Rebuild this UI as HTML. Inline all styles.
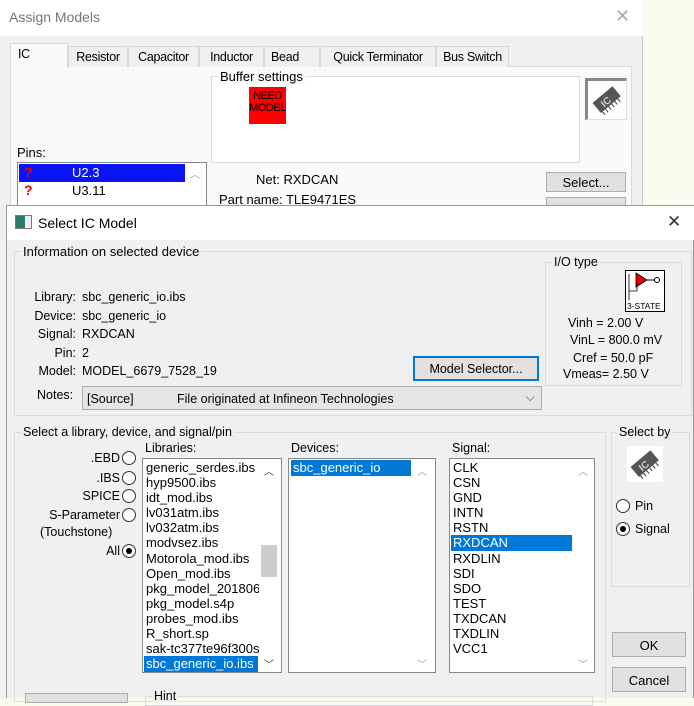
<!DOCTYPE html>
<html><head><meta charset="utf-8"><style>
*{margin:0;padding:0;box-sizing:border-box}
body{width:694px;height:698px;overflow:hidden;position:relative;background:#fbfbee;font-family:"Liberation Sans",sans-serif;font-size:12.5px;color:#000}
.a{position:absolute;white-space:nowrap}
.gb{position:absolute;border:1px solid #dcdcdc}
.gl{position:absolute;background:#f0f0f0;padding:0 2px;top:-9px;left:6px}
.btn{position:absolute;background:#e1e1e1;border:1px solid #adadad;text-align:center}
.list{position:absolute;background:#fff;border:1px solid #828790}
.sel{background:#0078d7;color:#fff}
.rad{position:absolute;width:14px;height:14px;border:1px solid #333;border-radius:50%;background:#fff}
.rad.on::after{content:"";position:absolute;left:3px;top:3px;width:6px;height:6px;border-radius:50%;background:#000}
.tab{position:absolute;top:46px;height:21px;border:1px solid #d9d9d9;border-bottom:none;background:#f0f0f0;padding:3px 0 0;font-size:12.5px;letter-spacing:-0.3px;text-align:center;white-space:nowrap}
.chev{color:#999;font-size:10px}
</style></head><body>
<div class="a" style="left:0;top:0;width:643px;height:698px;background:#f0f0f0;border-right:1px solid #ccc"></div>
<div class="a" style="left:0;top:0;width:643px;height:36px;background:#fff"></div>
<div class="a" style="left:9px;top:9px;font-size:14px;color:#777">Assign Models</div>
<div class="a" style="left:615px;top:6px;font-size:18px;color:#aaa">✕</div>
<div class="a" style="left:10px;top:66px;width:622px;height:150px;background:#fafafa;border:1px solid #d9d9d9"></div>
<div class="tab" style="left:10px;top:43px;height:25px;width:58px;background:#fafafa;text-align:left;padding-left:7px">IC</div>
<div class="tab" style="left:68px;width:60px">Resistor</div>
<div class="tab" style="left:128px;width:71px">Capacitor</div>
<div class="tab" style="left:199px;width:65px">Inductor</div>
<div class="tab" style="left:264px;width:56px;text-align:left;padding-left:6px">Bead</div>
<div class="tab" style="left:320px;width:116px">Quick Terminator</div>
<div class="tab" style="left:436px;width:73px">Bus Switch</div>
<div class="gb" style="left:211px;top:76px;width:369px;height:87px;background:#fff"><div class="gl" style="background:#fafafa;left:6px;top:-8px;font-size:13px">Buffer settings</div></div>
<div class="a" style="left:249px;top:87px;width:37px;height:37px;background:#f00;font-size:11px;line-height:12px;text-align:center;padding-top:3px;font-family:'Liberation Sans Narrow','Liberation Sans',sans-serif;letter-spacing:-0.5px">NEED<br>MODEL</div>
<div class="a" style="left:585px;top:78px;width:42px;height:42px;background:#fff;border-top:3px solid #888;border-left:3px solid #888;border-right:1px solid #ddd;border-bottom:1px solid #ddd">
<svg width="38" height="38" viewBox="0 0 38 38"><g transform="rotate(-40 19 19)"><rect x="6" y="12" width="26" height="13" fill="#555"/><text x="12" y="23" font-size="10" font-weight="bold" fill="#ccc" font-family="Liberation Sans">IC</text><path d="M8 25v4M12 25v4M16 25v4M20 25v4M24 25v4M28 25v4" stroke="#333"/></g></svg></div>
<div class="a" style="left:17px;top:145px;font-size:13px">Pins:</div>
<div class="list" style="left:17px;top:162px;width:190px;height:60px"></div>
<div class="a sel" style="left:19px;top:164px;width:166px;height:18px;background:#0a14f5"></div>
<div class="a" style="left:24px;top:164px;color:#e00;font-weight:bold;font-size:14px">?</div>
<div class="a" style="left:72px;top:165px;color:#fff;font-size:13px">U2.3</div>
<div class="a" style="left:24px;top:182px;color:#e00;font-weight:bold;font-size:14px">?</div>
<div class="a" style="left:72px;top:183px;font-size:13px">U3.11</div>
<div class="a chev" style="left:190px;top:166px">︿</div>
<div class="a" style="left:256px;top:172px;font-size:13px">Net: RXDCAN</div>
<div class="a" style="left:219px;top:192px;font-size:13px">Part name: TLE9471ES</div>
<div class="btn" style="left:546px;top:172px;width:80px;height:20px;padding-top:2px;font-size:13px">Select...</div>
<div class="btn" style="left:546px;top:197px;width:80px;height:20px"></div>
<div class="a" style="left:6px;top:205px;width:688px;height:493px;background:#f0f0f0;border:1px solid #999;border-bottom:none"></div>
<div class="a" style="left:7px;top:206px;width:687px;height:34px;background:#fff"></div>
<div class="a" style="left:15px;top:215px;width:17px;height:14px;border:1px solid #777;background:linear-gradient(90deg,#2c7a6a 60%,#eee 60%)"></div>
<div class="a" style="left:38px;top:215px;font-size:14px">Select IC Model</div>
<div class="a" style="left:667px;top:212px;font-size:17px;color:#333">✕</div>
<div class="gb" style="left:14px;top:251px;width:678px;height:165px"><div class="gl" style="font-size:13px;top:-8px">Information on selected device</div></div>
<div class="gb" style="left:545px;top:262px;width:137px;height:124px"><div class="gl" style="top:-8px">I/O type</div></div>
<div class="a" style="left:625px;top:270px;width:40px;height:42px;background:#fff;border:1.5px solid #000">
<svg width="38" height="30" viewBox="0 0 38 30"><path d="M3 3v26M3 20h8M11 20v-8M10 2l11 7-11 7z" fill="#e00" stroke="#000" stroke-width="0.8"/><path d="M21 9h8" stroke="#000"/><circle cx="31" cy="9" r="2.5" fill="none" stroke="#000"/></svg>
<div class="a" style="left:1px;top:30px;font-size:8.5px">3-STATE</div></div>
<div class="a" style="left:568px;top:316px">Vinh = 2.00 V</div>
<div class="a" style="left:570px;top:333px">VinL = 800.0 mV</div>
<div class="a" style="left:573px;top:351px">Cref = 50.0 pF</div>
<div class="a" style="left:563px;top:367px">Vmeas= 2.50 V</div>
<div class="a" style="left:0;top:288px;width:76px;text-align:right;line-height:18.5px">Library:<br>Device:<br>Signal:<br>Pin:<br>Model:</div>
<div class="a" style="left:82px;top:288px;line-height:18.5px">sbc_generic_io.ibs<br>sbc_generic_io<br>RXDCAN<br>2<br>MODEL_6679_7528_19</div>
<div class="btn" style="left:413px;top:356px;width:126px;height:25px;border:2px solid #0078d7;padding-top:4px">Model Selector...</div>
<div class="a" style="left:37px;top:388px">Notes:</div>
<div class="a" style="left:82px;top:386px;width:460px;height:24px;background:#e5e5e5;border:1px solid #adadad;padding:5px 4px"><span>[Source]</span><span style="position:absolute;left:94px">File originated at Infineon Technologies</span><span style="position:absolute;right:6px;top:3px;color:#555">⌵</span></div>
<div class="gb" style="left:14px;top:432px;width:592px;height:270px"><div class="gl" style="top:-8px">Select a library, device, and signal/pin</div></div>
<div class="gb" style="left:611px;top:432px;width:79px;height:155px"><div class="gl" style="top:-8px;left:5px">Select by</div></div>
<div class="a" style="left:627px;top:446px;width:36px;height:36px;background:#fff"><svg width="36" height="36"><g transform="rotate(-40 18 18)"><rect x="5" y="11" width="26" height="13" fill="#555"/><text x="11" y="22" font-size="10" font-weight="bold" fill="#ccc" font-family="Liberation Sans">IC</text><path d="M7 24v4M11 24v4M15 24v4M19 24v4M23 24v4M27 24v4" stroke="#333"/></g></svg></div>
<div class="rad" style="left:616px;top:499px"></div><div class="a" style="left:635px;top:499px">Pin</div>
<div class="rad on" style="left:616px;top:522px"></div><div class="a" style="left:635px;top:522px">Signal</div>
<div class="a" style="left:0;top:451px;width:120px;text-align:right">.EBD</div><div class="rad" style="left:122px;top:451px"></div>
<div class="a" style="left:0;top:471px;width:120px;text-align:right">.IBS</div><div class="rad" style="left:122px;top:471px"></div>
<div class="a" style="left:0;top:489px;width:120px;text-align:right">SPICE</div><div class="rad" style="left:122px;top:489px"></div>
<div class="a" style="left:0;top:508px;width:120px;text-align:right">S-Parameter</div><div class="rad" style="left:122px;top:508px"></div>
<div class="a" style="left:40px;top:525px">(Touchstone)</div>
<div class="a" style="left:0;top:544px;width:120px;text-align:right">All</div><div class="rad on" style="left:122px;top:544px"></div>
<div class="a" style="left:145px;top:441px">Libraries:</div>
<div class="a" style="left:291px;top:441px">Devices:</div>
<div class="a" style="left:452px;top:441px">Signal:</div>
<div class="list" style="left:142px;top:458px;width:140px;height:215px"></div>
<div class="a" style="left:261px;top:545px;width:16px;height:32px;background:#cdcdcd"></div>
<div class="a chev" style="left:264px;top:463px;color:#333">︿</div><div class="a chev" style="left:264px;top:656px;color:#333">﹀</div>
<div class="a sel" style="left:144px;top:656px;width:114px;height:16px"></div>
<div class="a" style="left:146px;top:460px;line-height:15.1px;font-size:13px;overflow:hidden;width:113px">generic_serdes.ibs<br>hyp9500.ibs<br>idt_mod.ibs<br>lv031atm.ibs<br>lv032atm.ibs<br>modvsez.ibs<br>Motorola_mod.ibs<br>Open_mod.ibs<br>pkg_model_201806<br>pkg_model.s4p<br>probes_mod.ibs<br>R_short.sp<br>sak-tc377te96f300s<br><span style="color:#fff">sbc_generic_io.ibs</span></div>
<div class="list" style="left:288px;top:458px;width:148px;height:215px"></div>
<div class="a sel" style="left:291px;top:460px;width:120px;height:16px"></div>
<div class="a" style="left:293px;top:460px;color:#fff;font-size:13px">sbc_generic_io</div>
<div class="a chev" style="left:417px;top:463px">︿</div><div class="a chev" style="left:417px;top:656px">﹀</div>
<div class="list" style="left:449px;top:458px;width:146px;height:215px"></div>
<div class="a sel" style="left:451px;top:535px;width:121px;height:16px"></div>
<div class="a" style="left:453px;top:460px;line-height:15.1px;font-size:13px">CLK<br>CSN<br>GND<br>INTN<br>RSTN<br><span style="color:#fff">RXDCAN</span><br>RXDLIN<br>SDI<br>SDO<br>TEST<br>TXDCAN<br>TXDLIN<br>VCC1</div>
<div class="a chev" style="left:578px;top:463px">︿</div><div class="a chev" style="left:578px;top:656px">﹀</div>
<div class="btn" style="left:612px;top:632px;width:74px;height:25px;padding-top:5px;font-size:13px">OK</div>
<div class="btn" style="left:612px;top:667px;width:74px;height:25px;padding-top:5px;font-size:13px">Cancel</div>
<div class="gb" style="left:145px;top:696px;width:448px;height:10px"><div class="gl" style="top:-8px">Hint</div></div>
<div class="btn" style="left:25px;top:693px;width:103px;height:10px"></div>
</body></html>
